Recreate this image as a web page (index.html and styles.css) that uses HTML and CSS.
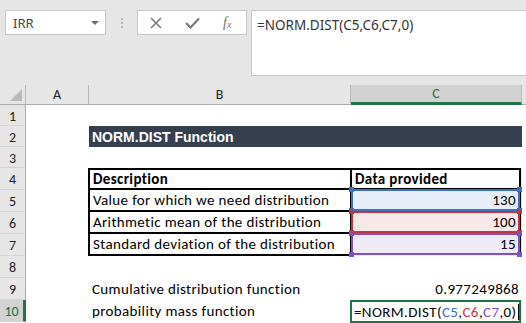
FILE: index.html
```html
<!DOCTYPE html>
<html lang="en">

<head>
    <meta charset="UTF-8">
    <title>NORM.DIST Function</title>
    <link rel="stylesheet" href="styles.css">
</head>

<body>
    <div class="toolbar">
        <div class="name-box">
            <span>IRR</span>
            <span class="caret"></span>
        </div>
        <div class="grip"><i></i><i></i><i></i></div>
        <div class="fx-buttons">
            <svg width="12" height="12" viewBox="0 0 12 12"><path d="M1 1 L11 11 M11 1 L1 11" stroke="#7a7a7a" stroke-width="1.6" fill="none"/></svg>
            <svg width="15" height="12" viewBox="0 0 15 12"><path d="M1 6 L5.5 10.5 L14 1.5" stroke="#7a7a7a" stroke-width="2.2" fill="none"/></svg>
            <span class="fx">f<sub>x</sub></span>
        </div>
        <div class="formula-box">=NORM.DIST(C5,C6,C7,0)</div>
    </div>

    <div class="sheet">
        <div class="corner"><span></span></div>
        <div class="col-head">A</div>
        <div class="col-head">B</div>
        <div class="col-head active">C</div>
        <div class="col-head rest"></div>

        <div class="row-head">1</div>
        <div class="cell"></div><div class="cell"></div><div class="cell"></div><div class="cell"></div>

        <div class="row-head">2</div>
        <div class="cell"></div>
        <div class="cell title">NORM.DIST Function</div>
        <div class="cell title"></div>
        <div class="cell"></div>

        <div class="row-head">3</div>
        <div class="cell"></div><div class="cell"></div><div class="cell"></div><div class="cell"></div>

        <div class="row-head">4</div>
        <div class="cell"></div>
        <div class="cell tb tb-top tb-left bold">Description</div>
        <div class="cell tb tb-top tb-right bold">Data provided</div>
        <div class="cell"></div>

        <div class="row-head">5</div>
        <div class="cell"></div>
        <div class="cell tb tb-left">Value for which we need distribution</div>
        <div class="cell tb tb-right num ref blue">130<i class="q1"></i><i class="q2"></i><i class="q3"></i><i class="q4"></i></div>
        <div class="cell"></div>

        <div class="row-head">6</div>
        <div class="cell"></div>
        <div class="cell tb tb-left">Arithmetic mean of the distribution</div>
        <div class="cell tb tb-right num ref red">100<i class="q1"></i><i class="q2"></i><i class="q3"></i><i class="q4"></i></div>
        <div class="cell"></div>

        <div class="row-head">7</div>
        <div class="cell"></div>
        <div class="cell tb tb-left">Standard deviation of the distribution</div>
        <div class="cell tb tb-right num ref purple">15<i class="q1"></i><i class="q2"></i><i class="q3"></i><i class="q4"></i></div>
        <div class="cell"></div>

        <div class="row-head">8</div>
        <div class="cell"></div><div class="cell"></div><div class="cell"></div><div class="cell"></div>

        <div class="row-head">9</div>
        <div class="cell"></div>
        <div class="cell">Cumulative distribution function</div>
        <div class="cell num">0.977249868</div>
        <div class="cell"></div>

        <div class="row-head active">10</div>
        <div class="cell"></div>
        <div class="cell">probability mass function</div>
        <div class="cell editing">=NORM.DIST(<span class="c-blue">C5</span>,<span class="c-red">C6</span>,<span class="c-purple">C7</span>,0)<span class="cursor"></span></div>
        <div class="cell"></div>
    </div>
</body>

</html>
```

FILE: styles.css
```css
body {
    margin: 0;
    width: 526px;
    height: 323px;
    overflow: hidden;
    background: #fff;
    font-family: Carlito, Lato, 'Liberation Sans', sans-serif;
}

.toolbar {
    height: 85px;
    background: #e6e6e6;
    display: flex;
    align-items: flex-start;
    padding-top: 10px;
    box-sizing: border-box;
}

.name-box {
    margin-left: 5px;
    width: 101px;
    height: 25px;
    box-sizing: border-box;
    background: #fff;
    border: 1px solid #c6c6c6;
    display: flex;
    align-items: center;
    justify-content: space-between;
    padding: 0 6px 0 7px;
    font-family: 'Noto Sans', 'Open Sans', sans-serif;
    font-size: 13px;
    color: #444;
}

.caret {
    width: 0;
    height: 0;
    border-left: 4px solid transparent;
    border-right: 4px solid transparent;
    border-top: 4px solid #6f6f6f;
}

.grip {
    width: 31px;
    height: 25px;
    display: flex;
    flex-direction: column;
    align-items: center;
    justify-content: center;
    gap: 2px;
}

.grip i {
    width: 2px;
    height: 2px;
    background: #b5b5b5;
}

.fx-buttons {
    width: 110px;
    height: 25px;
    box-sizing: border-box;
    background: #fff;
    border: 1px solid #c6c6c6;
    display: flex;
    align-items: center;
    gap: 23px;
    padding-left: 12px;
}

.fx {
    font-family: 'Liberation Serif', serif;
    font-style: italic;
    font-size: 14px;
    color: #707070;
}

.fx sub {
    font-size: 10px;
    vertical-align: -1px;
}

.formula-box {
    margin-left: 4px;
    flex: 1;
    height: 66px;
    box-sizing: border-box;
    background: #fff;
    border: 1px solid #c6c6c6;
    border-right: none;
    padding: 5px 0 0 5px;
    font-family: 'Noto Sans', 'Open Sans', sans-serif;
    font-size: 13.5px;
    color: #333;
}

.sheet {
    display: grid;
    grid-template-columns: 26px 63px 262px 171px 1fr;
    grid-template-rows: 20px 21px 21px 21px repeat(7, 22px);
    background: #e6e6e6;
}

.corner {
    border-right: 1px solid #b8b8b8;
    border-bottom: 1px solid #ababab;
    display: flex;
    align-items: flex-end;
    justify-content: flex-end;
    padding: 0 3px 3px 0;
}

.corner span {
    width: 0;
    height: 0;
    border-left: 12px solid transparent;
    border-bottom: 12px solid #b9b9b9;
}

.col-head {
    border-right: 1px solid #b8b8b8;
    border-bottom: 1px solid #ababab;
    display: flex;
    align-items: center;
    justify-content: center;
    font-size: 14px;
    color: #222;
}

.col-head.active {
    background: #d2d2d2;
    color: #217346;
    border-bottom: 3px solid #217346;
}

.col-head.rest {
    border-right: none;
}

.row-head {
    background: #e6e6e6;
    border-right: 1px solid #ababab;
    border-bottom: 1px solid #d4d4d4;
    display: flex;
    align-items: center;
    justify-content: center;
    padding-top: 2px;
    font-size: 14px;
    color: #222;
}

.row-head.active {
    background: #d2d2d2;
    color: #217346;
    border-right: 3px solid #217346;
}

.cell {
    background: #fff;
    position: relative;
    display: flex;
    align-items: center;
    padding: 0 3px;
    font-size: 15px;
    letter-spacing: 0.35px;
    color: #000;
    white-space: nowrap;
}

.title {
    background: #363f4e;
    color: #fff;
    font-family: 'Liberation Sans', Arial, sans-serif;
    font-weight: bold;
    font-size: 14px;
    letter-spacing: 0;
}

.bold {
    font-weight: bold;
}

.tb {
    border-bottom: 2px solid #000;
}

.tb-top {
    border-top: 2px solid #000;
}

.tb-left {
    border-left: 2px solid #000;
    margin-left: -1px;
}

.tb-right {
    border-left: 2px solid #000;
    border-right: 2px solid #000;
    margin-left: -1px;
    margin-right: 1px;
}

.num {
    justify-content: flex-end;
}

.ref {
    border-bottom-color: transparent;
}

.ref::after {
    content: '';
    position: absolute;
    left: -1px;
    right: -1px;
    top: -1px;
    bottom: -1px;
    border: 2px solid;
}

.blue { background: #e8eef8; }
.blue::after { border-color: #3a6ec8; }
.red { background: #f9e8e8; }
.red::after { border-color: #c1373f; }
.purple { background: #eeeaf7; }
.purple::after { border-color: #7f50c0; }

.ref i {
    position: absolute;
    width: 5px;
    height: 5px;
    z-index: 1;
}

.blue i { background: #3a6ec8; }
.red i { background: #c1373f; }
.purple i { background: #7f50c0; }

.q1 { left: -3px; top: -3px; }
.q2 { right: -3px; top: -3px; }
.q3 { left: -3px; bottom: -3px; }
.q4 { right: -3px; bottom: -3px; }

.editing {
    border: 2px solid #217346;
    margin: 0 1px -1px -1px;
    padding: 0 0 0 2px;
    overflow: hidden;
    letter-spacing: 0.4px;
}

.c-blue { color: #3a6ec8; }
.c-red { color: #c1373f; }
.c-purple { color: #7f50c0; }

.cursor {
    width: 1px;
    height: 16px;
    background: #000;
    margin-left: 1px;
}
```
